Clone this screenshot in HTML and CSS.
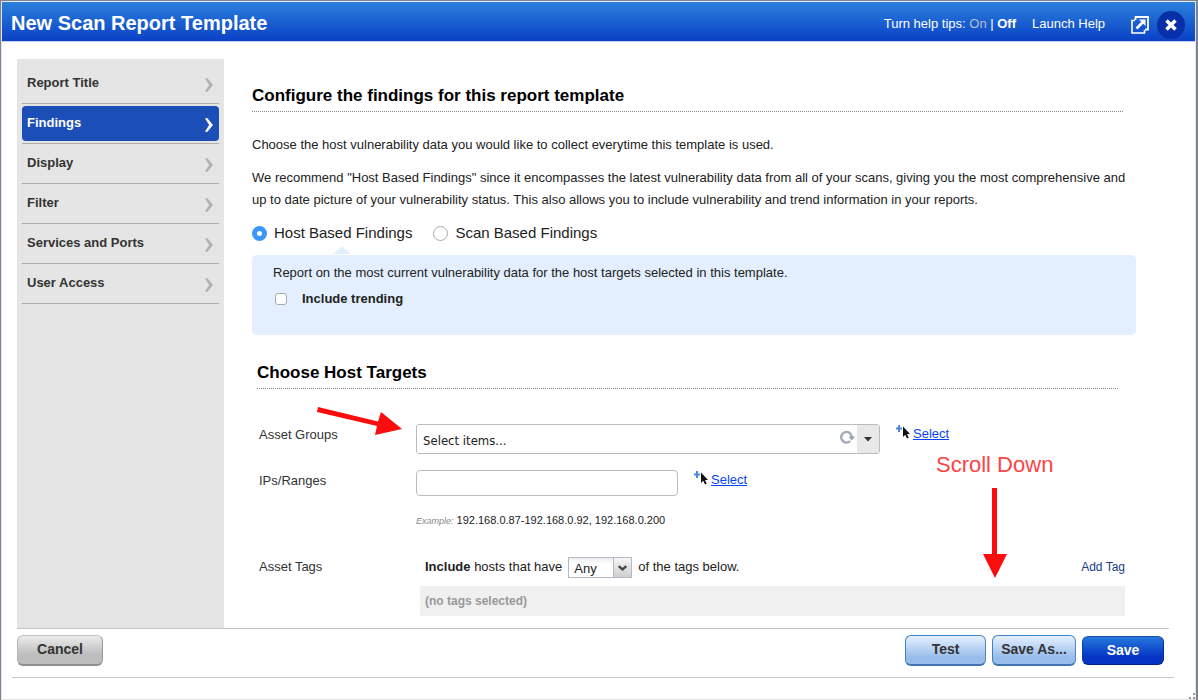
FILE: index.html
```html
<!DOCTYPE html>
<html lang="en">
<head>
<meta charset="utf-8">
<title>New Scan Report Template</title>
<link rel="stylesheet" href="styles.css">
</head>
<body>
<svg class="defs" width="0" height="0" aria-hidden="true">
  <symbol id="chevron" viewBox="0 0 8 14"><path d="M0 0.5 2.2 0 8 7 2.2 14 0 13.5 4.2 7Z" fill="currentColor"/></symbol>
  <symbol id="pick" viewBox="0 0 15 15">
    <path d="M4 1V8M1 4.5H7" stroke="#4f88d8" stroke-width="2" fill="none"/>
    <path d="M8 2.5V13L10.300 10.8 12 14.5 13.700 13.7 12.100 10H15Z" fill="#111"/>
  </symbol>
</svg>
<div class="window">
  <header class="titlebar">
    <h1 class="title">New Scan Report Template</h1>
    <div class="help">
      <span>Turn help tips: <a class="tip-on" href="#">On</a> | <a class="tip-off" href="#">Off</a></span>
      <a href="#">Launch Help</a>
    </div>
    <button class="icon-btn popout" type="button" aria-label="Open in new window">
      <svg width="18" height="18" viewBox="0 0 18 18" fill="none" stroke="#fff">
        <path d="M4.500 4V1H17V13.500H14" stroke-width="1.800"/><path d="M4 4.500H1V17H13.500V14" stroke-width="1.600"/>
        <path d="M5.500 12.500 12 6" stroke-width="2.600"/><path d="M8 3.500H14.500V10Z" fill="#fff" stroke="none"/>
      </svg>
    </button>
    <button class="icon-btn close" type="button" aria-label="Close">
      <svg width="28" height="28" viewBox="0 0 28 28"><circle cx="14" cy="14" r="14" fill="#062fa8"/><path d="M9.500 9.500 18.500 18.500M18.500 9.500 9.500 18.500" stroke="#fff" stroke-width="3.600"/></svg>
    </button>
  </header>

  <div class="body">
    <nav class="sidebar">
      <ul class="steps">
        <li class="step"><a class="step-link" href="#">Report Title<svg class="chev" width="8" height="14"><use href="#chevron"/></svg></a></li>
        <li class="step"><a class="step-link active" href="#">Findings<svg class="chev" width="8" height="14"><use href="#chevron"/></svg></a></li>
        <li class="step"><a class="step-link" href="#">Display<svg class="chev" width="8" height="14"><use href="#chevron"/></svg></a></li>
        <li class="step"><a class="step-link" href="#">Filter<svg class="chev" width="8" height="14"><use href="#chevron"/></svg></a></li>
        <li class="step"><a class="step-link" href="#">Services and Ports<svg class="chev" width="8" height="14"><use href="#chevron"/></svg></a></li>
        <li class="step"><a class="step-link" href="#">User Access<svg class="chev" width="8" height="14"><use href="#chevron"/></svg></a></li>
      </ul>
    </nav>

    <main class="content">
      <h2 class="heading">Configure the findings for this report template</h2>
      <p class="para">Choose the host vulnerability data you would like to collect everytime this template is used.</p>
      <p class="para">We recommend "Host Based Findings" since it encompasses the latest vulnerability data from all of your scans, giving you the most comprehensive and up to date picture of your vulnerability status. This also allows you to include vulnerability and trend information in your reports.</p>

      <div class="modes">
        <label class="mode"><input class="radio" type="radio" name="mode" checked>Host Based Findings</label>
        <label class="mode"><input class="radio" type="radio" name="mode">Scan Based Findings</label>
      </div>

      <div class="callout">
        <p class="callout-text">Report on the most current vulnerability data for the host targets selected in this template.</p>
        <label class="trend"><input class="check" type="checkbox">Include trending</label>
      </div>

      <section class="targets">
        <h2 class="heading">Choose Host Targets</h2>
        <div class="row row-groups">
          <label class="label" for="groups">Asset Groups</label>
          <div class="combo">
            <input class="combo-input" id="groups" type="text" value="Select items...">
            <button class="refresh" type="button" aria-label="Refresh">
              <svg width="15" height="14" viewBox="0 0 15 14"><path d="M10.200 11A5.300 5.300 0 1 1 11.800 7" fill="none" stroke="#a3abbb" stroke-width="2.400"/><path d="M8.500 6.500H15L11.800 10.500Z" fill="#98a1b4"/></svg>
            </button>
            <button class="drop" type="button" aria-label="Show items">
              <svg width="8" height="5" viewBox="0 0 8 5"><path d="M0 0H8L4 4.500Z" fill="#333"/></svg>
            </button>
          </div>
          <a class="pick" href="#"><svg width="15" height="15"><use href="#pick"/></svg><span class="pick-text">Select</span></a>
        </div>
        <div class="row row-ips">
          <label class="label" for="ips">IPs/Ranges</label>
          <input class="ips" id="ips" type="text">
          <a class="pick" href="#"><svg width="15" height="15"><use href="#pick"/></svg><span class="pick-text">Select</span></a>
        </div>
        <p class="example"><em class="example-word">Example:</em> 192.168.0.87-192.168.0.92, 192.168.0.200</p>
        <div class="tags">
          <span class="label">Asset Tags</span>
          <div class="tags-main">
            <div class="tags-rule">
              <label for="match"><b>Include</b> hosts that have</label>
              <span class="match-wrap">
                <select class="match" id="match"><option>Any</option><option>All</option></select>
                <svg class="match-icon" width="18" height="19" viewBox="0 0 18 19" aria-hidden="true"><path d="M5 8 9 11.500 13 8" fill="none" stroke="#444" stroke-width="2.400"/></svg>
              </span>
              <span>of the tags below.</span>
              <a class="add-tag" href="#">Add Tag</a>
            </div>
            <div class="tags-empty">(no tags selected)</div>
          </div>
        </div>
      </section>
    </main>
  </div>

  <footer class="footer">
    <div class="actions">
      <button class="btn btn-cancel" type="button">Cancel</button>
      <button class="btn btn-light" type="button">Test</button>
      <button class="btn btn-light btn-as" type="button">Save As...</button>
      <button class="btn btn-save" type="button">Save</button>
    </div>
    <svg class="grip" width="6" height="6" viewBox="0 0 6 6" fill="#999" aria-hidden="true"><path d="M4 0h2v2h-2zM4 4h2v2h-2zM0 4h2v2h-2z"/></svg>
  </footer>

  <svg class="note note-arrow" width="88" height="32" viewBox="0 0 88 32" aria-hidden="true"><path d="M1 0 61 14.500 64 5 85 22 58 28 60 19 0 5Z" fill="#fb0d0d"/></svg>
  <div class="note note-scroll">Scroll Down
    <svg width="26" height="90" viewBox="0 0 26 90" aria-hidden="true"><path d="M10 0H15V66H25L13 90 1 66H10Z" fill="#fb0d0d"/></svg>
  </div>
</div>
</body>
</html>
```
FILE: styles.css
```css
* { box-sizing: border-box; }
body {
  margin: 0;
  font: 13px/22px "Liberation Sans", Arial, sans-serif;
  color: #222;
}
h1, h2, p, ul { margin: 0; padding: 0; }
a { color: inherit; text-decoration: none; }
button, input, select { font: inherit; color: inherit; margin: 0; }
button { padding: 0; border: 0; background: none; }
.defs { position: absolute; }

.window {
  position: relative;
  min-height: 100vh;
  display: flex;
  flex-direction: column;
  border: solid #80838c;
  border-width: 1px 2px 0 1px;
  box-shadow: inset 0 0 0 1px #dfe4f2;
  background: #fff;
}

.titlebar {
  display: flex;
  align-items: center;
  height: 41px;
  margin: 0 1px;
  padding: 0 10px 0 9px;
  border-top: 1px solid #e3ebfa;
  border-bottom: 1px solid #c4cfee;
  background: linear-gradient(#2b80dc, #0a41c6);
  color: #fff;
}
.title { flex: 1; padding-top: 3px; font-size: 20px; }
.help { display: flex; gap: 16px; margin-right: 26px; padding-top: 4px; }
.tip-on { color: #b9bfca; }
.tip-off { font-weight: bold; }
.icon-btn { display: flex; padding-top: 7px; }
.popout { margin-right: 8px; }

.body { display: flex; flex: 1; padding: 17px 60px 0 16px; }
.sidebar { flex: none; width: 207px; padding: 5px; background: #e5e5e5; }
.steps { list-style: none; }
.step { padding: 2px 0; border-bottom: 1px solid #adadad; }
.step-link {
  display: flex;
  justify-content: space-between;
  height: 35px;
  padding: 0 6px 0 5px;
  border-radius: 4px;
  font-weight: bold;
  line-height: 33px;
  color: #333;
}
.active { background: #1b4eb7; color: #fff; }
.chev { margin-top: 12px; color: #b0b0b0; }
.active .chev { color: #fff; }

.content { flex: 1; padding: 25px 0 12px 28px; }
.heading {
  margin-right: 13px;
  padding-bottom: 4px;
  border-bottom: 1px dotted #888;
  font-size: 17px;
  line-height: 23px;
  color: #000;
}
.para { margin: 22px 0 11px; }
.para + .para { margin: 0 0 11px; }
.modes { display: flex; gap: 21px; font-size: 15px; }
.mode { display: flex; align-items: center; gap: 7px; }
.radio {
  appearance: none;
  width: 15px;
  height: 15px;
  border: 1px solid #aaa;
  border-radius: 50%;
  background: #fff;
}
.radio:checked { border: 5px solid #3b97fb; }

.callout {
  position: relative;
  height: 80px;
  margin-top: 11px;
  padding: 7px 21px;
  border-radius: 5px;
  background: #e3effe;
}
.callout::before {
  content: "";
  position: absolute;
  left: 81px;
  top: -9px;
  border: solid transparent;
  border-width: 0 9px 8px;
  border-bottom-color: #e3effe;
}
.trend { display: flex; align-items: center; gap: 15px; margin-top: 4px; font-weight: bold; }
.check {
  appearance: none;
  width: 12px;
  height: 12px;
  margin-left: 2px;
  border: 1px solid #aaa;
  border-radius: 3px;
  background: #fff;
}

.targets { padding: 26px 5px 0; }
.row { display: flex; padding-left: 2px; }
.label { flex: none; width: 157px; color: #333; }
.row-groups { margin-top: 35px; }
.row-ips { margin-top: 16px; }
.combo {
  display: flex;
  width: 464px;
  height: 30px;
  border: 1px solid #bbb;
  border-radius: 3px;
  overflow: hidden;
}
.combo-input {
  flex: 1;
  min-width: 0;
  padding: 3px 6px 0;
  border: 0;
  font-family: "DejaVu Sans Condensed", "DejaVu Sans", sans-serif;
}
.refresh { width: 20px; padding-top: 1px; }
.drop { width: 22px; background: #e8e8e8; }
.drop svg { vertical-align: middle; }
.pick { display: flex; gap: 3px; height: 20px; margin-left: 15px; line-height: 20px; color: #0645f0; }
.pick-text { text-decoration: underline; }
.ips { width: 262px; height: 26px; padding: 0 6px; border: 1px solid #bbb; border-radius: 4px; }
.example { margin: 13px 0 0 159px; font-size: 11px; }
.example-word { font-size: 9px; color: #888; }

.tags { display: flex; margin-top: 24px; padding-left: 2px; }
.tags-main { flex: 1; margin: 0 6px 0 4px; }
.tags-rule { display: flex; gap: 6px; padding: 0 0 8px 5px; }
.match-wrap { position: relative; display: flex; height: 21px; margin-top: 1px; }
.match {
  appearance: none;
  width: 64px;
  padding: 0 20px 0 5px;
  border: 1px solid #b5b8c8;
  border-radius: 0;
  background: linear-gradient(#eee, #fff 6px);
}
.match-icon {
  position: absolute;
  right: 1px;
  top: 1px;
  border-left: 1px solid #b5b8c8;
  background: linear-gradient(#f6f6f6, #cfcfcf);
  pointer-events: none;
}
.add-tag { margin-left: auto; font-size: 12px; color: #17408b; }
.tags-empty { padding: 4px 5px; background: #f0f0f0; font-size: 12px; font-weight: bold; color: #999; }

.footer { border-bottom: 1px solid #e2e2e2; }
.actions {
  display: flex;
  gap: 6px;
  height: 50px;
  margin: 0 22px 0 11px;
  padding: 7px 10px 0 5px;
  border-bottom: 1px solid #c5c5c5;
  background: linear-gradient(#c5c5c5, #c5c5c5) 5px 0 / calc(100% - 10px) 1px no-repeat;
}
.btn {
  height: 31px;
  padding-bottom: 3px;
  border: 1px solid;
  border-radius: 6px;
  font-size: 14px;
  font-weight: bold;
  line-height: 26px;
}
.btn-cancel {
  width: 86px;
  margin-right: auto;
  border-color: #c2c2c2 #999 #8f8f8f #b5b5b5;
  border-bottom-width: 2px;
  background: linear-gradient(#ececec, #bdbdbd 65%);
  color: #333;
}
.btn-light {
  width: 81px;
  border-color: #3f80cc #5584bd #4275b3 #3f80cc;
  border-bottom-width: 2px;
  background: linear-gradient(#e6f1ff, #98bdec 75%);
  color: #333;
}
.btn-as { width: 84px; }
.btn-save {
  width: 82px;
  height: 29px;
  margin-top: 1px;
  border-color: #1c4fae #06308f #06247e #0b40a8;
  background: linear-gradient(#2578dc, #0534c4 75%);
  color: #fff;
}
.grip { display: block; margin: 15px 1px 0 auto; }

.note { position: absolute; }
.note-arrow { left: 316px; top: 406px; }
.note-scroll {
  left: 935px;
  top: 450px;
  display: flex;
  flex-direction: column;
  align-items: center;
  gap: 9px;
  font-size: 22px;
  line-height: 28px;
  color: #fb4444;
}
```
